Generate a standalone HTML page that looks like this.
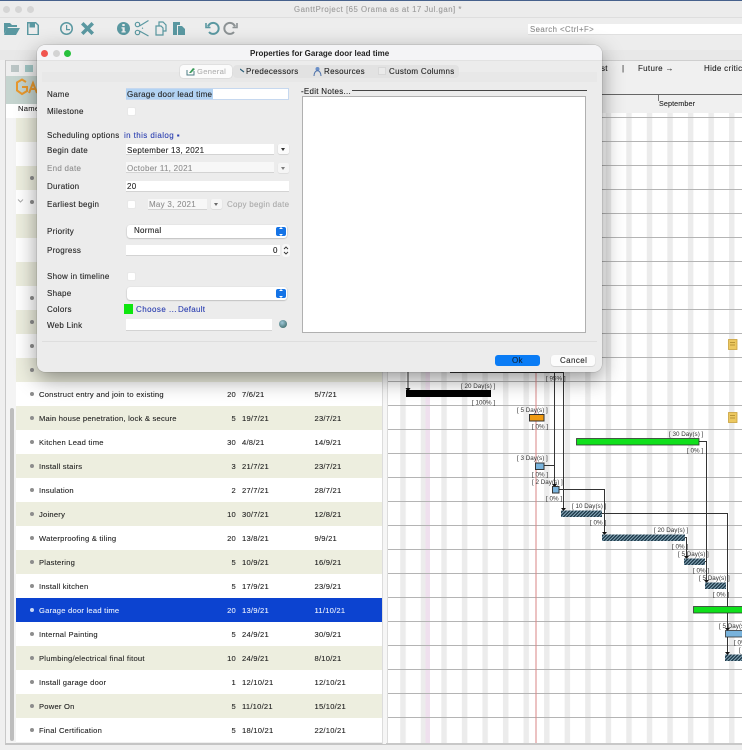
<!DOCTYPE html>
<html><head><meta charset="utf-8"><style>
*{box-sizing:border-box}
html,body{margin:0;padding:0;width:742px;height:750px;overflow:hidden;background:#efefef;font-family:"Liberation Sans",sans-serif}
.a{position:absolute}
.t{position:absolute;margin-top:1px;white-space:nowrap;font-size:7.6px;letter-spacing:.3px;color:#222;line-height:10px;font-weight:400;-webkit-text-stroke:.1px #222}
.r{position:absolute;left:16px;width:366px;height:24px;background:#fff}
.r.b{background:#edeedf}
.r.s{background:#0c43d0;left:16px;width:366px}
.r i{position:absolute;left:14px;top:10px;width:4px;height:4px;border-radius:2px;background:#8d8d8d}
.r.s i{background:#c8d6f5}
.r span{position:absolute;top:8px;line-height:10px;font-size:7.6px;letter-spacing:.23px;color:#222;white-space:nowrap;-webkit-text-stroke:.1px #222}
.r.s span{color:#e8eefc;-webkit-text-stroke:.1px #e8eefc}
.n{left:23px}.d{right:146px;text-align:right}.st{left:226px}.en{left:298.5px}
.l{position:absolute;margin-top:1px;white-space:nowrap;font-size:8px;letter-spacing:.27px;color:#262626;line-height:10px;-webkit-text-stroke:.12px #262626}
.g{color:#8e8e8e;-webkit-text-stroke:.1px #8e8e8e}
.f{position:absolute;background:#fff;height:11px;border-bottom:1px solid #d3d3d3}
.cb{position:absolute;width:9px;height:9px;background:#fff;border:1px solid #e8e8e8;border-radius:2px}
.dd{position:absolute;width:11px;height:10px;background:#fbfbfb;border-radius:2px;box-shadow:0 .5px 1px rgba(0,0,0,.2)}
.dd:after{content:"";position:absolute;left:3px;top:4px;border:2.5px solid transparent;border-top:3px solid #333;border-bottom:0}
.sel{position:absolute;height:13px;background:#fff;border-radius:3px;box-shadow:0 .5px 1.5px rgba(0,0,0,.3)}
.sel b{position:absolute;right:1px;top:2px;width:10px;height:9px;background:#1473e6;border-radius:2px}
.sel b:before,.sel b:after{content:"";position:absolute;left:3px;border:2px solid transparent}
.sel b:before{top:-.5px;border-bottom:2.5px solid #fff;border-top:0}
.sel b:after{bottom:0;border-top:2.5px solid #fff;border-bottom:0}
</style></head><body>

<!-- window chrome -->
<div class="a" style="left:0;top:0;width:742px;height:1px;background:#46618c"></div>
<div class="a" style="left:0;top:1px;width:742px;height:17px;background:#ececec;border-bottom:1px solid #dedede"></div>
<div class="a" style="left:3px;top:6px;width:7px;height:7px;border-radius:4px;background:#d5d5d5"></div>
<div class="a" style="left:15px;top:6px;width:7px;height:7px;border-radius:4px;background:#d5d5d5"></div>
<div class="a" style="left:27px;top:6px;width:7px;height:7px;border-radius:4px;background:#d5d5d5"></div>
<div class="t" style="left:294px;top:4px;color:#9a9a9a;-webkit-text-stroke:.1px #9a9a9a;font-size:7.8px;letter-spacing:.5px">GanttProject [65 Orama as at 17 Jul.gan] *</div>
<div class="a" style="left:0;top:18px;width:742px;height:33px;background:#ededed"></div>

<!-- toolbar icons -->
<svg class="a" style="left:0;top:18px" width="245" height="22" viewBox="0 0 245 22">
 <g fill="#5a98a1">
  <path d="M4 5h6l2 2h5v2H8l-4 7z"/><path d="M7 10h13l-4 7H4z"/>
  <path fill-rule="evenodd" d="M27 4h9l3 3v10H27zM28.500 5.500v10.500h9V7.500l-2-2h-.5v4h-5.500v-4z"/>
  <path fill-rule="evenodd" d="M66.500 4a6.500 6.500 0 1 0 0 13 6.500 6.500 0 0 0 0-13zm0 1.500a5 5 0 1 1 0 10 5 5 0 0 1 0-10z"/><path d="M66 7h1.200v4H70v1.200h-4z"/>
  <path d="M83.500 4l4 4 4-4 2.500 2.500-4 4 4 4-2.500 2.500-4-4-4 4L81 14.500l4-4-4-4z"/>
  <path fill-rule="evenodd" d="M123.500 4a6.500 6.500 0 1 0 0 13 6.500 6.500 0 0 0 0-13zM122.300 6h2.400v2h-2.400zm-.8 3.200h3.200v4h1v1.300h-4.200v-1.300h1v-2.700h-1z"/>
 </g>
 <g fill="none" stroke="#5a98a1" stroke-width="1.200">
  <circle cx="137.500" cy="6.500" r="2.200"/><circle cx="137.500" cy="14.500" r="2.200"/>
  <path d="M139.500 8l9-5.500M139.500 13l9 5M142 10.500l1-.6"/>
  <path d="M156 8h5l2 2v7h-7zM159 8V4h4l3 3v6h-3"/>
 </g>
 <path fill="#5a98a1" d="M173 4h7v3h-3v10h-4z"/>
 <path fill="#5a98a1" d="M178 8h4l3 3v6h-7z"/>
 <g fill="none" stroke-width="2">
  <path stroke="#5a98a1" d="M208 8.500A5.500 5.500 0 1 1 209 14"/>
  <path stroke="#5a98a1" d="M206 5v4.500h4.500" stroke-width="1.600"/>
  <path stroke="#8c9294" d="M235 8.500A5.500 5.500 0 1 0 234 14"/>
  <path stroke="#8c9294" d="M237 5v4.500h-4.500" stroke-width="1.600"/>
 </g>
</svg>

<!-- search -->
<div class="a" style="left:528px;top:24px;width:214px;height:11px;background:#fff;border-bottom:1px solid #e0e0e0"></div>
<div class="t" style="left:530px;top:24px;color:#8a8a8a;-webkit-text-stroke:.1px #8a8a8a;font-size:7.8px;letter-spacing:.45px">Search &lt;Ctrl+F&gt;</div>

<!-- main area -->
<div class="a" style="left:0;top:50px;width:742px;height:10px;background:#e8e8e8"></div>
<div class="a" style="left:5px;top:60px;width:737px;height:34px;background:#f0f0f0;border-top:1px solid #cfcfcf"></div>
<div class="a" style="left:5px;top:60px;width:1px;height:684px;background:#c8c8c8"></div>
<div class="a" style="left:6px;top:61px;width:376px;height:15px;background:#eee"></div>
<div class="a" style="left:11px;top:65px;width:8px;height:7px;background:#9aa;opacity:.6"></div>
<div class="a" style="left:25px;top:65px;width:8px;height:7px;background:#7fb2b0;opacity:.7"></div>
<div class="a" style="left:6px;top:76px;width:376px;height:28px;background:#c5d4cf"></div>
<svg class="a" style="left:14px;top:78px" width="26" height="20" viewBox="0 0 26 20"><path fill="none" stroke="#e8992e" stroke-width="2" d="M12 4L8 1.500 3 4.500v8L8 16l5-3V9H8"/><path fill="none" stroke="#e8992e" stroke-width="2" d="M15 15l4-10 4 10M16.500 11h5"/></svg>
<div class="a" style="left:6px;top:104px;width:376px;height:14px;background:#fff"></div>
<div class="t" style="left:18px;top:103px">Name</div>
<div class="a" style="left:6px;top:118px;width:10px;height:626px;background:#f4f4f4"></div>
<div class="a" style="left:10px;top:408px;width:4px;height:333px;background:#bdbdbd;border-radius:2px"></div>
<div class="a" style="left:5px;top:743px;width:381px;height:2px;background:#c5c5c5"></div>
<div class="a" style="left:382px;top:104px;width:6px;height:640px;background:#f6f6f6;border-right:1px solid #dcdcdc;border-left:1px solid #dcdcdc"></div>

<!-- table rows -->
<div class="r b" style="top:118px"></div><div class="r" style="top:142px"></div>
<div class="r b" style="top:166px"><i></i></div><div class="r" style="top:190px"><i></i></div>
<div class="r b" style="top:214px"></div><div class="r" style="top:238px"></div>
<div class="r b" style="top:262px"></div><div class="r" style="top:286px"><i></i></div>
<div class="r b" style="top:310px"><i></i></div><div class="r" style="top:334px"><i></i></div>
<div class="r b" style="top:358px"><i></i></div>
<svg class="a" style="left:17px;top:198px" width="7" height="6" viewBox="0 0 7 6"><path d="M1 1.500l2.500 2.500L6 1.500" fill="none" stroke="#aaa"/></svg>
<div class="r" style="top:382px"><i></i><span class="n">Construct entry and join to existing</span><span class="d">20</span><span class="st">7/6/21</span><span class="en">5/7/21</span></div>
<div class="r b" style="top:406px"><i></i><span class="n">Main house penetration, lock &amp; secure</span><span class="d">5</span><span class="st">19/7/21</span><span class="en">23/7/21</span></div>
<div class="r" style="top:430px"><i></i><span class="n">Kitchen Lead time</span><span class="d">30</span><span class="st">4/8/21</span><span class="en">14/9/21</span></div>
<div class="r b" style="top:454px"><i></i><span class="n">Install stairs</span><span class="d">3</span><span class="st">21/7/21</span><span class="en">23/7/21</span></div>
<div class="r" style="top:478px"><i></i><span class="n">Insulation</span><span class="d">2</span><span class="st">27/7/21</span><span class="en">28/7/21</span></div>
<div class="r b" style="top:502px"><i></i><span class="n">Joinery</span><span class="d">10</span><span class="st">30/7/21</span><span class="en">12/8/21</span></div>
<div class="r" style="top:526px"><i></i><span class="n">Waterproofing &amp; tiling</span><span class="d">20</span><span class="st">13/8/21</span><span class="en">9/9/21</span></div>
<div class="r b" style="top:550px"><i></i><span class="n">Plastering</span><span class="d">5</span><span class="st">10/9/21</span><span class="en">16/9/21</span></div>
<div class="r" style="top:574px"><i></i><span class="n">Install kitchen</span><span class="d">5</span><span class="st">17/9/21</span><span class="en">23/9/21</span></div>
<div class="r s" style="top:598px"><i></i><span class="n">Garage door lead time</span><span class="d">20</span><span class="st">13/9/21</span><span class="en">11/10/21</span></div>
<div class="r" style="top:622px"><i></i><span class="n">Internal Painting</span><span class="d">5</span><span class="st">24/9/21</span><span class="en">30/9/21</span></div>
<div class="r b" style="top:646px"><i></i><span class="n">Plumbing/electrical final fitout</span><span class="d">10</span><span class="st">24/9/21</span><span class="en">8/10/21</span></div>
<div class="r" style="top:670px"><i></i><span class="n">Install garage door</span><span class="d">1</span><span class="st">12/10/21</span><span class="en">12/10/21</span></div>
<div class="r b" style="top:694px"><i></i><span class="n">Power On</span><span class="d">5</span><span class="st">11/10/21</span><span class="en">15/10/21</span></div>
<div class="r" style="top:718px"><i></i><span class="n">Final Certification</span><span class="d">5</span><span class="st">18/10/21</span><span class="en">22/10/21</span></div>

<!-- gantt top strip -->
<div class="t" style="left:601px;top:63px;font-size:8px">st</div>
<div class="t" style="left:622px;top:63px;font-size:8px">|</div>
<div class="t" style="left:638px;top:63px;font-size:8px">Future →</div>
<div class="t" style="left:704px;top:63px;font-size:8px">Hide critical</div>
<div class="a" style="left:388px;top:94px;width:354px;height:19px;background:#f0f0f0;border-top:1px solid #666"></div>
<div class="a" style="left:658px;top:95px;width:1px;height:6px;background:#777"></div>
<div class="t" style="left:659px;top:98px;font-size:7.2px;letter-spacing:.1px">September</div>

<!-- gantt -->
<svg class="a" style="left:388px;top:113px" width="354" height="630" viewBox="388 113 354 630">
 <defs>
  <pattern id="h" width="2.400" height="2.400" patternUnits="userSpaceOnUse" patternTransform="rotate(45)"><rect width="2.400" height="2.400" fill="#93b4c6"/><rect width="1.500" height="2.400" fill="#1f3a4a"/></pattern>
  <pattern id="st" x="400.200" y="0" width="20.550" height="10" patternUnits="userSpaceOnUse"><rect width="5.500" height="10" fill="#ececec"/></pattern>
 </defs>
 <rect x="388" y="113" width="354" height="630" fill="#fff"/>
 <rect x="388" y="113" width="354" height="630" fill="url(#st)"/>
 <rect x="425.500" y="113" width="4.500" height="630" fill="#efe0ee"/>
 <g stroke="#b4b4b4" stroke-width="1">
  <path d="M388 117.500H742M388 141.500H742M388 165.500H742M388 189.500H742M388 213.500H742M388 237.500H742M388 261.500H742M388 285.500H742M388 309.500H742M388 333.500H742M388 357.500H742M388 381.500H742M388 405.500H742M388 429.500H742M388 453.500H742M388 477.500H742M388 501.500H742M388 525.500H742M388 549.500H742M388 573.500H742M388 597.500H742M388 621.500H742M388 645.500H742M388 669.500H742M388 693.500H742M388 717.500H742"/>
 </g>
 <path d="M536 113V743" stroke="#d88686" stroke-width="1"/>
 <!-- dependency lines -->
 <g fill="none" stroke="#333" stroke-width="1">
  <path d="M408 372V388"/>
  <path d="M450 372.500H563"/>
  <path d="M554.500 372V484"/>
  <path d="M563.500 372V508"/>
  <path d="M544 465.500H554"/>
  <path d="M559 489.500H604.500V532"/>
  <path d="M602 513.500H727.500V652"/>
  <path d="M699 441.500H706.500V580"/>
  <path d="M685 537.500H686.500V556"/>
  <path d="M705 561.500H707"/>
 </g>
 <g fill="#111">
  <path d="M405.500 388h5l-2.500 4zM552 484h5l-2.500 3.500zM561 508h5l-2.500 3zM602 532h5l-2.500 3zM684 556h5l-2.500 3zM704 580h5l-2.500 3zM725 628h5l-2.500 3zM725 652h5l-2.500 3z"/>
 </g>
 <!-- bars -->
 <rect x="406" y="390" width="85" height="7" fill="#000"/>
 <rect x="529.500" y="414.500" width="14.500" height="6.500" fill="#f09a11" stroke="#333" stroke-width="1"/>
 <rect x="576.500" y="438.500" width="122.500" height="6.500" fill="#10e01c" stroke="#333" stroke-width=".8"/>
 <rect x="535.500" y="463" width="8.500" height="6.500" fill="#79b3dc" stroke="#333" stroke-width="1"/>
 <rect x="552.500" y="486.500" width="6.500" height="6.500" fill="#79b3dc" stroke="#333" stroke-width="1"/>
 <rect x="561" y="510.500" width="41" height="6.500" fill="url(#h)"/>
 <rect x="602" y="534.500" width="83" height="6.500" fill="url(#h)"/>
 <rect x="684" y="558.500" width="21" height="6.500" fill="url(#h)"/>
 <rect x="705" y="582.500" width="21" height="6.500" fill="url(#h)"/>
 <rect x="693.500" y="606.500" width="50" height="6.500" fill="#10e01c" stroke="#333" stroke-width=".8"/>
 <rect x="725.500" y="630.500" width="18" height="6.500" fill="#79b3dc" stroke="#333" stroke-width=".8"/>
 <rect x="725" y="654.500" width="17" height="6.500" fill="url(#h)"/>
 <!-- notes -->
 <rect x="728.500" y="339.500" width="8.500" height="10" fill="#ecc860" stroke="#c9a13d" stroke-width=".8"/>
 <path d="M730 342.500h5M730 345h5" stroke="#a8842a" stroke-width=".7"/>
 <rect x="728.500" y="412.500" width="8.500" height="10" fill="#ecc860" stroke="#c9a13d" stroke-width=".8"/>
 <path d="M730 415.500h5M730 418h5" stroke="#a8842a" stroke-width=".7"/>
 <g font-family="Liberation Sans" font-size="6.300" fill="#333">
  <text x="461" y="388">[ 20 Day(s) ]</text><text x="472" y="404.500">[ 100% ]</text>
  <text x="546" y="380.500">[ 95% ]</text>
  <text x="517" y="412">[ 5 Day(s) ]</text><text x="532" y="428.500">[ 0% ]</text>
  <text x="669" y="436">[ 30 Day(s) ]</text><text x="687" y="452.500">[ 0% ]</text>
  <text x="517" y="460">[ 3 Day(s) ]</text><text x="532" y="476.500">[ 0% ]</text>
  <text x="532" y="484">[ 2 Day(s) ]</text><text x="546" y="500.500">[ 0% ]</text>
  <text x="572" y="508">[ 10 Day(s) ]</text><text x="590" y="524.500">[ 0% ]</text>
  <text x="654" y="532">[ 20 Day(s) ]</text><text x="672" y="548.500">[ 0% ]</text>
  <text x="678" y="556">[ 5 Day(s) ]</text><text x="693" y="572.500">[ 0% ]</text>
  <text x="699" y="580">[ 5 Day(s) ]</text><text x="713" y="596.500">[ 0% ]</text>
  <text x="719" y="628">[ 5 Day(s) ]</text><text x="734" y="644.500">[ 0% ]</text>
  <text x="739" y="652">[</text>
 </g>
</svg>
<div class="a" style="left:386px;top:743px;width:356px;height:2px;background:#c8c8c8"></div>

<!-- dialog -->
<div class="a" style="left:37px;top:45px;width:565px;height:327px;background:#ececec;border-radius:8px;box-shadow:0 7px 22px rgba(0,0,0,.42),0 0 0 .5px rgba(0,0,0,.15);overflow:hidden">
 <div class="a" style="left:0;top:0;width:565px;height:16px;background:#f4f4f6;border-bottom:1px solid #e2e2e2"></div>
 <div class="a" style="left:5px;top:27px;width:555px;height:10px;background:#e8e8e8"></div>
 <div class="a" style="left:5px;top:37px;width:555px;height:260px;border-bottom:1px solid #dedede"></div>
</div>
<div class="a" style="left:41px;top:50px;width:7px;height:7px;border-radius:4px;background:#f0554f"></div>
<div class="a" style="left:53px;top:50px;width:7px;height:7px;border-radius:4px;background:#d3d3d3"></div>
<div class="a" style="left:64px;top:50px;width:7px;height:7px;border-radius:4px;background:#27c13c"></div>
<div class="t" style="left:250px;top:48px;font-weight:700;font-size:8px;letter-spacing:0;-webkit-text-stroke:0">Properties for Garage door lead time</div>

<!-- tabs -->
<div class="a" style="left:233px;top:65px;width:226px;height:13px;background:#e2e2e2;border-radius:4px"></div>
<div class="a" style="left:180px;top:65px;width:52px;height:13px;background:#fbfbfb;border-radius:3px;box-shadow:0 0 1px rgba(0,0,0,.3)"></div>
<svg class="a" style="left:186px;top:67px" width="10" height="9" viewBox="0 0 10 9"><path d="M1 3v5h7V4" fill="none" stroke="#4d7d86" stroke-width="1"/><path d="M3 6l4-5 2 1-4 4z" fill="#3a9a5a"/></svg>
<div class="t g" style="left:197px;top:66px;font-size:7.6px;color:#b0b0b0;-webkit-text-stroke:.1px #b0b0b0">General</div>
<svg class="a" style="left:240px;top:68px" width="5" height="6" viewBox="0 0 5 6"><path d="M0 1l4 3" stroke="#2c5f7a" stroke-width="1.200"/></svg>
<div class="t" style="left:246px;top:66px;font-size:8px">Predecessors</div>
<svg class="a" style="left:313px;top:66px" width="9" height="11" viewBox="0 0 9 11"><circle cx="4.500" cy="3" r="2" fill="#6a8fc8"/><path d="M1 10c0-7 7-7 7 0" fill="none" stroke="#4a6fa8"/></svg>
<div class="t" style="left:324px;top:66px;font-size:8px">Resources</div>
<div class="a" style="left:378px;top:67px;width:8px;height:8px;background:#eaeaea;border:1px solid #d8d8d8"></div>
<div class="t" style="left:389px;top:66px;font-size:8px">Custom Columns</div>

<!-- form -->
<div class="l" style="left:47px;top:89px">Name</div>
<div class="f" style="left:126px;top:88px;width:163px;height:12px;border:1px solid #c6d8ef"></div>
<div class="a" style="left:126px;top:89px;width:87px;height:10px;background:#b3d3f3"></div>
<div class="l" style="left:127px;top:89px">Garage door lead time</div>
<div class="l" style="left:47px;top:106px">Milestone</div>
<div class="cb" style="left:127px;top:107px"></div>
<div class="l" style="left:47px;top:130px">Scheduling options</div>
<div class="l" style="left:124px;top:130px;color:#2a3eb0;-webkit-text-stroke:.1px #2a3eb0;letter-spacing:.4px">in this dialog ▪</div>
<div class="l" style="left:47px;top:145px">Begin date</div>
<div class="f" style="left:126px;top:144px;width:148px"></div>
<div class="l" style="left:127px;top:145px">September 13, 2021</div>
<div class="dd" style="left:278px;top:144px"></div>
<div class="l g" style="left:47px;top:163px">End date</div>
<div class="f" style="left:126px;top:162px;width:148px;background:#f7f7f7"></div>
<div class="l g" style="left:127px;top:163px">October 11, 2021</div>
<div class="dd" style="left:278px;top:163px;opacity:.6"></div>
<div class="l" style="left:47px;top:181px">Duration</div>
<div class="f" style="left:126px;top:181px;width:163px"></div>
<div class="l" style="left:127px;top:181px">20</div>
<div class="l" style="left:47px;top:199px">Earliest begin</div>
<div class="cb" style="left:127px;top:200px"></div>
<div class="f" style="left:148px;top:199px;width:59px;background:#f7f7f7"></div>
<div class="l g" style="left:149px;top:199px">May 3, 2021</div>
<div class="dd" style="left:211px;top:199px;opacity:.7"></div>
<div class="l g" style="left:227px;top:199px;color:#aaa;-webkit-text-stroke:.1px #aaa">Copy begin date</div>
<div class="l" style="left:47px;top:226px">Priority</div>
<div class="sel" style="left:127px;top:225px;width:160px"><b></b></div>
<div class="l" style="left:134px;top:225px">Normal</div>
<div class="l" style="left:47px;top:245px">Progress</div>
<div class="f" style="left:126px;top:245px;width:154px"></div>
<div class="l" style="left:273px;top:245px">0</div>
<div class="a" style="left:282px;top:244px;width:8px;height:13px;background:#f8f8f8;border-radius:3px"></div>
<svg class="a" style="left:282px;top:244px" width="8" height="13" viewBox="0 0 8 13"><path d="M2 5l2-2 2 2M2 8l2 2 2-2" fill="none" stroke="#333" stroke-width=".9"/></svg>
<div class="l" style="left:47px;top:271px">Show in timeline</div>
<div class="cb" style="left:127px;top:272px"></div>
<div class="l" style="left:47px;top:288px">Shape</div>
<div class="sel" style="left:127px;top:287px;width:160px"><b></b></div>
<div class="l" style="left:47px;top:304px">Colors</div>
<div class="a" style="left:124px;top:304px;width:9px;height:10px;background:#0ee60e"></div>
<div class="l" style="left:136px;top:304px;color:#2a3eb0;-webkit-text-stroke:.1px #2a3eb0;letter-spacing:.45px">Choose ...</div>
<div class="l" style="left:178px;top:304px;color:#2a3eb0;-webkit-text-stroke:.1px #2a3eb0">Default</div>
<div class="l" style="left:47px;top:320px">Web Link</div>
<div class="f" style="left:126px;top:319px;width:146px;height:12px"></div>
<div class="a" style="left:279px;top:320px;width:8px;height:8px;border-radius:4px;background:radial-gradient(circle at 40% 35%,#9fc7d8,#4c7a7c 70%)"></div>

<!-- notes -->
<div class="l" style="left:301px;top:86px">-Edit Notes...</div>
<div class="a" style="left:352px;top:90px;width:235px;height:1px;background:#444"></div>
<div class="a" style="left:302px;top:96px;width:284px;height:237px;background:#fff;border:1px solid #b0b0b0"></div>

<!-- buttons -->
<div class="a" style="left:495px;top:355px;width:45px;height:11px;background:#0a7cf5;border-radius:3px"></div>
<div class="t" style="left:512px;top:355px;color:#123;font-size:8px;-webkit-text-stroke:.1px #123">Ok</div>
<div class="a" style="left:551px;top:355px;width:44px;height:11px;background:#fcfcfc;border-radius:3px;box-shadow:0 .5px 1px rgba(0,0,0,.2)"></div>
<div class="t" style="left:560px;top:355px;font-size:8px;letter-spacing:.4px">Cancel</div>

</body></html>
